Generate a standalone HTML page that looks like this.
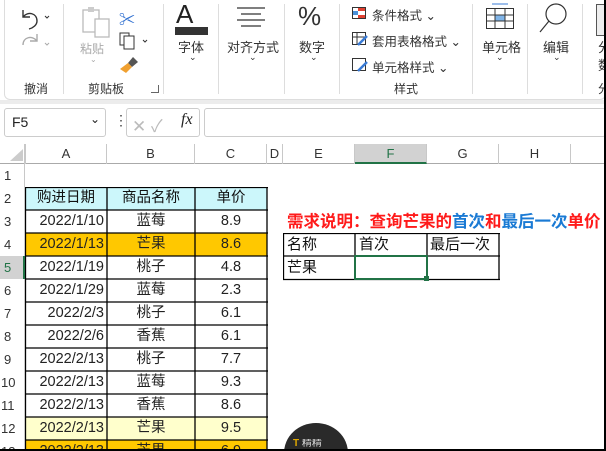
<!DOCTYPE html>
<html style="width:606px;height:451px;overflow:hidden"><head><meta charset="utf-8"><style>
*{margin:0;padding:0;box-sizing:border-box}
body{width:606px;height:451px;overflow:hidden;background:#fff;font-family:"Liberation Sans","Noto Sans CJK SC",sans-serif;position:relative;color:#222}
.a{position:absolute}
.t{font-size:12px;color:#333;white-space:nowrap}
.sep{position:absolute;top:4px;width:1px;height:90px;background:#ddd}
.cell{position:absolute;font-size:14.5px;color:#111;white-space:nowrap;line-height:23px}
.hdr{position:absolute;top:144px;height:20px;font-size:13px;line-height:20px;text-align:center;color:#333;border-right:1px solid #c8c8c8}
.rn{position:absolute;left:0;width:25px;font-size:13px;line-height:23px;text-align:left;padding-left:4px;color:#333}
.col{position:absolute;top:210px;height:240px;overflow:hidden;font-size:14.5px;line-height:23px}
</style></head><body>
<div class="a" style="left:4px;top:0;width:602px;height:100px;border:1px solid #ddd;border-top:none;border-radius:0 0 6px 6px;background:#fff"></div>
<div class="a" style="left:0;top:100px;width:606px;height:4px;background:#ececec"></div>
<div class="sep" style="left:63px"></div><div class="sep" style="left:163px"></div><div class="sep" style="left:218px"></div><div class="sep" style="left:284px"></div><div class="sep" style="left:339px"></div><div class="sep" style="left:472px"></div><div class="sep" style="left:527px"></div><div class="sep" style="left:582px"></div>
<svg class="a" style="left:18px;top:4px" width="36" height="44"><path d="M5 6v7h7M5 13c5-6 14-4 14 4 0 4-4 7-8 8" fill="none" stroke="#333" stroke-width="1.4"/><path d="M27 12l2 2 2-2" fill="none" stroke="#333"/><path d="M19 30v7h-7M19 37c-5-6-14-4-14 4" fill="none" stroke="#aaa" stroke-width="1.4"/><path d="M27 39l2 2 2-2" fill="none" stroke="#aaa"/></svg>
<div class="a t" style="left:24px;top:80px">撤消</div>
<svg class="a" style="left:80px;top:6px" width="34" height="32"><rect x="3" y="4" width="16" height="22" fill="none" stroke="#bbb" stroke-width="1.3"/><rect x="8" y="1" width="6" height="5" fill="#ccc"/><rect x="15" y="13" width="14" height="18" fill="#fff" stroke="#bbb" stroke-width="1.3"/></svg>
<div class="a t" style="left:80px;top:40px;color:#aaa">粘贴</div>
<div class="a t" style="left:90px;top:55px;color:#aaa;font-size:8px">⌄</div>
<div class="a" style="left:119px;top:6px;color:#2f6fd0;font-size:16px">✂</div>
<svg class="a" style="left:119px;top:32px" width="32" height="18"><rect x="1" y="1" width="9" height="12" fill="none" stroke="#333"/><rect x="5" y="4" width="10" height="13" fill="#fff" stroke="#333"/><path d="M24 8l2 2 2-2" fill="none" stroke="#333"/></svg>
<svg class="a" style="left:119px;top:56px" width="20" height="18"><path d="M14 1l5 5-6 5-4-4z" fill="#555"/><path d="M9 7l4 4-6 6-6-4z" fill="#f0a030"/></svg>
<div class="a t" style="left:88px;top:80px">剪贴板</div>
<div class="a" style="left:151px;top:85px;width:8px;height:8px;border:1px solid #666;border-top:none;border-left:none"></div>
<div class="a" style="left:176px;top:0px;font-size:26px;color:#222;line-height:28px">A</div>
<div class="a" style="left:175px;top:27px;width:33px;height:8px;background:#333"></div>
<div class="a t" style="left:178px;top:37px;font-size:13px">字体</div>
<div class="a t" style="left:189px;top:52px;font-size:9px">⌄</div>
<svg class="a" style="left:236px;top:6px" width="30" height="24"><path d="M1 2h28M5 8h20M1 14h28M5 20h20" stroke="#333" stroke-width="1.2"/></svg>
<div class="a t" style="left:227px;top:37px;font-size:13px">对齐方式</div>
<div class="a t" style="left:249px;top:52px;font-size:9px">⌄</div>
<div class="a" style="left:298px;top:2px;font-size:26px;color:#333;line-height:28px">%</div>
<div class="a t" style="left:299px;top:37px;font-size:13px">数字</div>
<div class="a t" style="left:310px;top:52px;font-size:9px">⌄</div>
<svg class="a" style="left:352px;top:7px" width="14" height="12"><rect x="0.5" y="0.5" width="13" height="11" fill="#fff" stroke="#333"/><rect x="6" y="1" width="7" height="3" fill="#e04030"/><rect x="6" y="8" width="7" height="3" fill="#e04030"/><rect x="1" y="4" width="5" height="4" fill="#4a90d9"/></svg>
<div class="a t" style="left:372px;top:5px;font-size:12.5px">条件格式 ⌄</div>
<svg class="a" style="left:352px;top:32px" width="16" height="14"><rect x="0.5" y="0.5" width="13" height="12" fill="#fff" stroke="#333"/><path d="M5 1v12M1 5h13" stroke="#333"/><path d="M6 13l9-9" stroke="#3a7bd5" stroke-width="2.5"/></svg>
<div class="a t" style="left:372px;top:31px;font-size:12.5px">套用表格格式 ⌄</div>
<svg class="a" style="left:352px;top:58px" width="16" height="14"><rect x="0.5" y="0.5" width="13" height="12" fill="#fff" stroke="#333"/><path d="M6 13l9-9" stroke="#3a7bd5" stroke-width="2.5"/></svg>
<div class="a t" style="left:372px;top:57px;font-size:12.5px">单元格样式 ⌄</div>
<div class="a t" style="left:394px;top:80px">样式</div>
<svg class="a" style="left:486px;top:3px" width="28" height="26"><path d="M6 1h16" stroke="#3a7bd5"/><rect x="0.5" y="5.5" width="27" height="20" fill="#fff" stroke="#333"/><rect x="9" y="12" width="10" height="6" fill="#7fb4e8"/><path d="M9 6v19M19 6v19M1 12h27M1 18h27" stroke="#333"/></svg>
<div class="a t" style="left:482px;top:37px;font-size:13px">单元格</div>
<div class="a t" style="left:496px;top:52px;font-size:9px">⌄</div>
<svg class="a" style="left:538px;top:2px" width="30" height="34"><circle cx="18" cy="12" r="10" fill="none" stroke="#333" stroke-width="1.2"/><path d="M11 19L2 30" stroke="#333" stroke-width="1.2"/></svg>
<div class="a t" style="left:543px;top:37px;font-size:13px">编辑</div>
<div class="a t" style="left:553px;top:52px;font-size:9px">⌄</div>
<div class="a" style="left:596px;top:4px;width:10px;height:32px;border:1px solid #555;background:#eee"></div>
<div class="a t" style="left:598px;top:37px;font-size:13px;width:8px;overflow:hidden">分</div>
<div class="a t" style="left:598px;top:55px;font-size:13px;width:8px;overflow:hidden">数</div>
<div class="a t" style="left:598px;top:80px;width:8px;overflow:hidden">分</div>
<div class="a" style="left:4px;top:108px;width:102px;height:29px;border:1px solid #ccc;border-radius:3px"></div>
<div class="a" style="left:12px;top:114px;font-size:14px;color:#222">F5</div>
<div class="a" style="left:90px;top:112px;font-size:12px;color:#222">⌄</div>
<div class="a" style="left:114px;top:112px;font-size:14px;color:#444">⋮</div>
<div class="a" style="left:126px;top:108px;width:74px;height:29px;border:1px solid #ccc;border-radius:3px"></div>
<div class="a" style="left:132px;top:112px;font-size:17px;color:#bbb">✕ ✓</div>
<div class="a" style="left:181px;top:111px;font-size:16px;font-style:italic;font-family:'Liberation Serif',serif;color:#222">fx</div>
<div class="a" style="left:204px;top:108px;width:402px;height:29px;border:1px solid #ccc;border-radius:3px"></div>
<div class="a" style="left:0;top:144px;width:606px;height:20px;background:#fff;border-bottom:1px solid #aaa"></div>
<svg class="a" style="left:8px;top:148px" width="16" height="14"><path d="M15 1v12H2z" fill="#ccc"/></svg>
<div class="hdr" style="left:25px;width:82px;border-left:1px solid #c8c8c8">A</div>
<div class="hdr" style="left:107px;width:88px">B</div>
<div class="hdr" style="left:195px;width:72px">C</div>
<div class="hdr" style="left:267px;width:16px">D</div>
<div class="hdr" style="left:283px;width:72px">E</div>
<div class="hdr" style="left:355px;width:72px;background:#d2d2d2;color:#217346;border-bottom:2px solid #217346">F</div>
<div class="hdr" style="left:427px;width:72px">G</div>
<div class="hdr" style="left:499px;width:72px">H</div>
<div class="a" style="left:24px;top:144px;width:1px;height:306px;background:#c8c8c8"></div>
<div class="a" style="left:0;top:256px;width:25px;height:23px;background:#d2d2d2;border-right:2px solid #217346"></div>
<div class="rn" style="top:164px">1</div><div class="rn" style="top:187px">2</div><div class="rn" style="top:210px">3</div><div class="rn" style="top:233px">4</div><div class="rn" style="top:256px;color:#217346">5</div><div class="rn" style="top:279px">6</div><div class="rn" style="top:302px">7</div><div class="rn" style="top:325px">8</div><div class="rn" style="top:348px">9</div><div class="rn" style="top:371px;padding-left:1px">10</div><div class="rn" style="top:394px;padding-left:1px">11</div><div class="rn" style="top:417px;padding-left:1px">12</div><div class="rn" style="top:440px;padding-left:1px;height:10px;overflow:hidden">13</div>
<svg class="a" style="left:25px;top:187px" width="243" height="263">
<rect x="0" y="0" width="242" height="23" fill="#ccf7fb"/>
<rect x="0" y="46" width="242" height="23" fill="#ffc800"/>
<rect x="0" y="230" width="242" height="23" fill="#ffffcc"/>
<rect x="0" y="253" width="242" height="23" fill="#ffc800"/>
<g stroke="#000" stroke-width="1.3">
<path d="M0.5 0v264M82 0v264M170 0v264M242 0v264"/>
<path d="M0 0.5h243M0 23h243M0 46h243M0 69h243M0 92h243M0 115h243M0 138h243M0 161h243M0 184h243M0 207h243M0 230h243M0 253h243"/>
</g></svg>
<div class="cell" style="left:25px;top:187px;width:82px;text-align:center">购进日期</div>
<div class="cell" style="left:107px;top:187px;width:88px;text-align:center">商品名称</div>
<div class="cell" style="left:195px;top:187px;width:72px;text-align:center">单价</div>
<div class="col" style="left:25px;width:82px;text-align:right;padding-right:3px">2022/1/10<br>2022/1/13<br>2022/1/19<br>2022/1/29<br>2022/2/3<br>2022/2/6<br>2022/2/13<br>2022/2/13<br>2022/2/13<br>2022/2/13<br>2022/2/13</div>
<div class="col" style="left:107px;width:88px;text-align:center">蓝莓<br>芒果<br>桃子<br>蓝莓<br>桃子<br>香蕉<br>桃子<br>蓝莓<br>香蕉<br>芒果<br>芒果</div>
<div class="col" style="left:195px;width:72px;text-align:center">8.9<br>8.6<br>4.8<br>2.3<br>6.1<br>6.1<br>7.7<br>9.3<br>8.6<br>9.5<br>6.9</div>
<div class="cell" style="left:287px;top:211px;width:317px;overflow:hidden;font-size:16.5px;font-weight:bold;color:#ff1a1a">需求说明：查询芒果的<span style="color:#1a7ad4">首次</span>和<span style="color:#1a7ad4">最后一次</span>单价</div>
<svg class="a" style="left:283px;top:233px" width="218" height="48"><g stroke="#000" stroke-width="1.3"><path d="M0.5 0v47M72 0v47M144 0v47M216 0v47M0 0.5h217M0 23h217M0 46.5h217"/></g><rect x="72" y="23" width="72" height="23" fill="none" stroke="#217346" stroke-width="2"/><rect x="141" y="43" width="5" height="5" fill="#217346"/></svg>
<div class="cell" style="left:287px;top:233px;font-size:15px">名称</div>
<div class="cell" style="left:359px;top:233px;font-size:15px">首次</div>
<div class="cell" style="left:430px;top:233px;font-size:15px">最后一次</div>
<div class="cell" style="left:287px;top:256px;font-size:15px">芒果</div>
<svg class="a" style="left:284px;top:423px" width="64" height="26"><ellipse cx="32" cy="30" rx="32" ry="30" fill="#2a2a2a"/></svg>
<div class="a" style="left:293px;top:439px;font-size:10px;color:#ddd;line-height:10px;height:10px;overflow:hidden"><span style="color:#e0a800;font-weight:bold">T</span> 精精</div>
<div class="a" style="left:604px;top:0;width:2px;height:451px;background:#000"></div>
<div class="a" style="left:0;top:449px;width:606px;height:2px;background:#000"></div>
</body></html>
